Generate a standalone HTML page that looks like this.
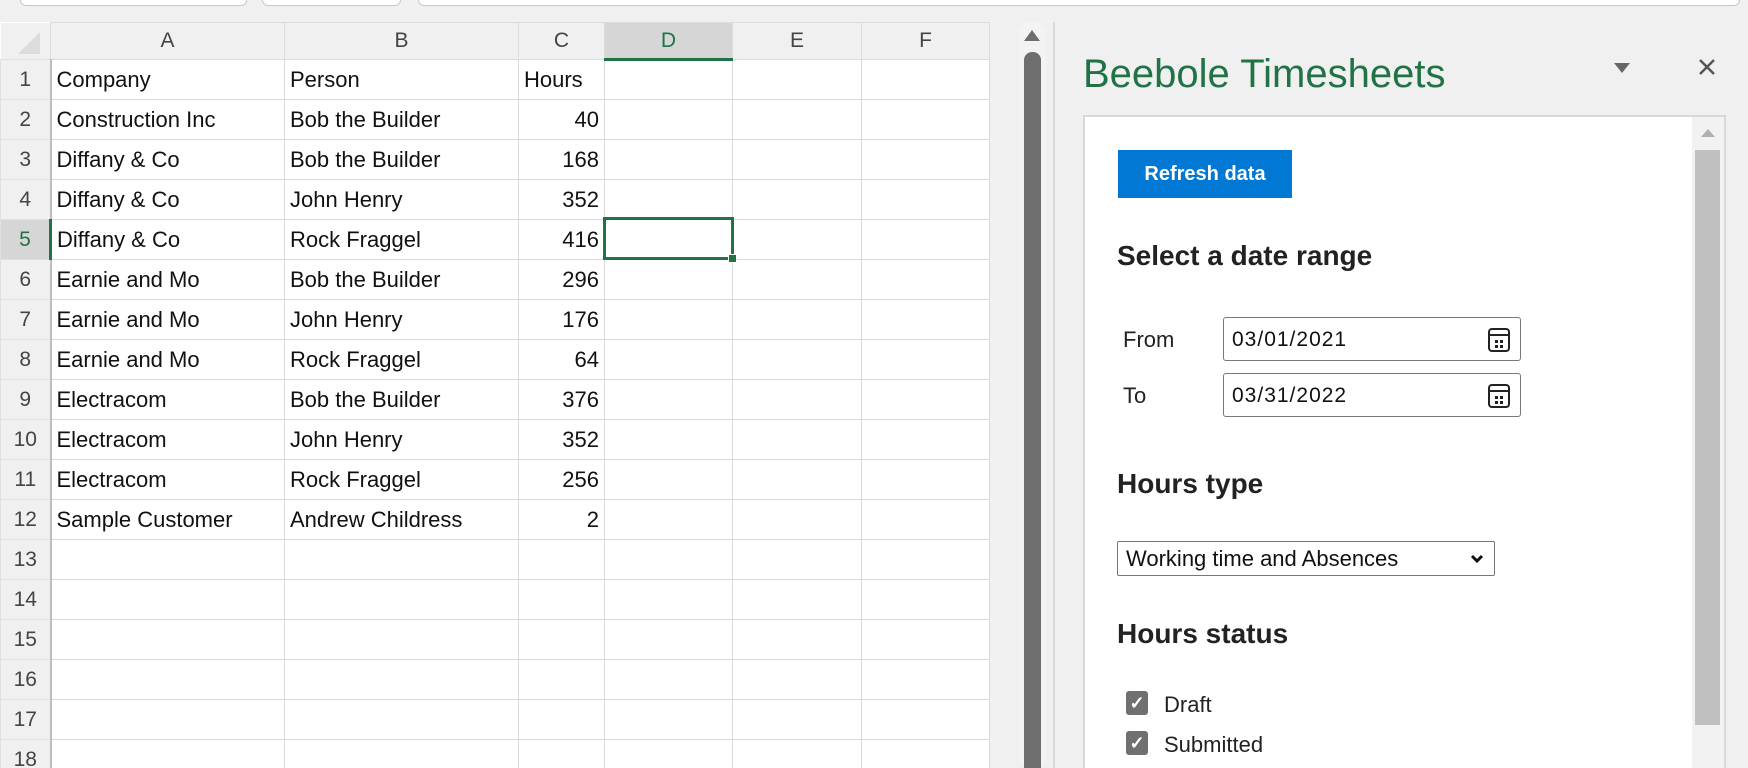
<!DOCTYPE html>
<html><head><meta charset="utf-8"><style>
*{box-sizing:border-box;margin:0;padding:0}
html,body{width:1748px;height:768px;overflow:hidden}
body{background:#f0f0f0;position:relative;font-family:"Liberation Sans",sans-serif}
#wrap{position:absolute;left:0;top:0;width:1748px;height:768px;overflow:hidden}
.tb{position:absolute;top:-6px;height:12px;background:#fff;border:1px solid #c8c8c8;border-radius:6px}
.grid{position:absolute;left:0;top:22px;width:990px;height:746px;overflow:hidden}
table{border-collapse:collapse;table-layout:fixed;background:#fff}
tr{height:40px}
td{border:1px solid #d9d9d9;height:40px;line-height:38px;font-size:22px;color:#111;padding:0 5px;white-space:nowrap;overflow:hidden}
tr.h{height:37px}
tr.h td{height:37px;line-height:34px;background:#f0f0f0;text-align:center;color:#444;font-size:21px;border-color:#dcdcdc;padding:0}
td.n{background:#f0f0f0;color:#444;text-align:center;padding:0;font-size:21px;border-color:#e0e0e0;border-right:2px solid #bdbdbd}
td.r{text-align:right}
.pane{position:absolute;left:1053px;top:22px;width:695px;height:746px;border-left:2px solid #dadada}
.abs{position:absolute}
.hd{font-weight:bold;font-size:28px;color:#222}
.inp{position:absolute;left:1223px;width:298px;height:44px;border:1.5px solid #777;border-radius:3px;background:#fff;font-size:21px;color:#111;padding:10px 0 0 8px;letter-spacing:1px}
.cal{position:absolute;right:10px;top:10px;width:22px;height:24px;border:2px solid #222;border-radius:4px}
.cal:before{content:"";position:absolute;left:0;right:0;top:4px;border-top:2px solid #222}
.cal:after{content:"";position:absolute;left:5px;top:10px;width:3px;height:3px;background:#222;box-shadow:5px 0 #222,0 5px #222,5px 5px #222}
.cb{position:absolute;left:1126px;width:22px;height:24px;background:#707070;border-radius:3px;color:#fff;font-size:18px;text-align:center;line-height:24px;font-weight:bold}
</style></head><body><div id="wrap">
<div class="tb" style="left:20px;width:227px"></div>
<div class="tb" style="left:262px;width:139px"></div>
<div class="tb" style="left:418px;width:1322px"></div>

<div class="grid"><table>
<colgroup><col style="width:50px"><col style="width:234px"><col style="width:234px"><col style="width:86px"><col style="width:128px"><col style="width:129px"><col style="width:128px"></colgroup>
<tr class="h"><td style="border:none"></td><td>A</td><td>B</td><td>C</td><td style="background:#d6d6d6;color:#217346;border-bottom:3px solid #217346">D</td><td>E</td><td>F</td></tr>
<tr><td class="n">1</td><td>Company</td><td>Person</td><td>Hours</td><td></td><td></td><td></td></tr>
<tr><td class="n">2</td><td>Construction Inc</td><td>Bob the Builder</td><td class="r">40</td><td></td><td></td><td></td></tr>
<tr><td class="n">3</td><td>Diffany &amp; Co</td><td>Bob the Builder</td><td class="r">168</td><td></td><td></td><td></td></tr>
<tr><td class="n">4</td><td>Diffany &amp; Co</td><td>John Henry</td><td class="r">352</td><td></td><td></td><td></td></tr>
<tr><td class="n" style="background:#d6d6d6;color:#217346;border-right:3px solid #217346">5</td><td>Diffany &amp; Co</td><td>Rock Fraggel</td><td class="r">416</td><td></td><td></td><td></td></tr>
<tr><td class="n">6</td><td>Earnie and Mo</td><td>Bob the Builder</td><td class="r">296</td><td></td><td></td><td></td></tr>
<tr><td class="n">7</td><td>Earnie and Mo</td><td>John Henry</td><td class="r">176</td><td></td><td></td><td></td></tr>
<tr><td class="n">8</td><td>Earnie and Mo</td><td>Rock Fraggel</td><td class="r">64</td><td></td><td></td><td></td></tr>
<tr><td class="n">9</td><td>Electracom</td><td>Bob the Builder</td><td class="r">376</td><td></td><td></td><td></td></tr>
<tr><td class="n">10</td><td>Electracom</td><td>John Henry</td><td class="r">352</td><td></td><td></td><td></td></tr>
<tr><td class="n">11</td><td>Electracom</td><td>Rock Fraggel</td><td class="r">256</td><td></td><td></td><td></td></tr>
<tr><td class="n">12</td><td>Sample Customer</td><td>Andrew Childress</td><td class="r">2</td><td></td><td></td><td></td></tr>
<tr><td class="n">13</td><td></td><td></td><td></td><td></td><td></td><td></td></tr>
<tr><td class="n">14</td><td></td><td></td><td></td><td></td><td></td><td></td></tr>
<tr><td class="n">15</td><td></td><td></td><td></td><td></td><td></td><td></td></tr>
<tr><td class="n">16</td><td></td><td></td><td></td><td></td><td></td><td></td></tr>
<tr><td class="n">17</td><td></td><td></td><td></td><td></td><td></td><td></td></tr>
<tr><td class="n">18</td><td></td><td></td><td></td><td></td><td></td><td></td></tr>
</table></div>
<svg class="abs" style="left:16px;top:30px" width="26" height="26"><polygon points="24,2 24,24 2,24" fill="#dcdcdc"/></svg>
<div class="abs" style="left:603px;top:217px;width:131px;height:43px;border:3px solid #217346"></div>
<div class="abs" style="left:728px;top:254px;width:9px;height:9px;background:#217346;border:1px solid #fff"></div>

<div class="abs" style="left:1018px;top:22px;width:28px;height:746px;background:#f3f3f3;border-radius:12px"></div>
<svg class="abs" style="left:1023px;top:28px" width="18" height="14"><polygon points="9,2 17,13 1,13" fill="#6e6e6e"/></svg>
<div class="abs" style="left:1024px;top:52px;width:17px;height:716px;background:#6e6e6e;border-radius:8px 8px 0 0"></div>

<div class="pane"></div>
<div class="abs" style="left:1083px;top:52px;font-size:40px;color:#217346">Beebole Timesheets</div>
<svg class="abs" style="left:1613px;top:62px" width="18" height="12"><polygon points="1,1 17,1 9,11" fill="#666"/></svg>
<svg class="abs" style="left:1697px;top:57px" width="20" height="20"><path d="M3 3L17 17M17 3L3 17" stroke="#555" stroke-width="2.5"/></svg>

<div class="abs" style="left:1083px;top:115px;width:643px;height:653px;background:#fff;border:2px solid #d8d8d8;border-bottom:none"></div>
<div class="abs" style="left:1692px;top:117px;width:32px;height:651px;background:#f2f2f2"></div>
<svg class="abs" style="left:1700px;top:128px" width="16" height="10"><polygon points="8,1 15,9 1,9" fill="#b0b0b0"/></svg>
<div class="abs" style="left:1695px;top:150px;width:25px;height:575px;background:#c0c0c0"></div>

<div class="abs" style="left:1118px;top:150px;width:174px;height:48px;background:#0078d4;color:#fff;font-weight:bold;font-size:20px;text-align:center;line-height:48px">Refresh data</div>
<div class="abs hd" style="left:1117px;top:240px">Select a date range</div>
<div class="abs" style="left:1123px;top:327px;font-size:22px;color:#222">From</div>
<div class="abs" style="left:1123px;top:383px;font-size:22px;color:#222">To</div>
<div class="inp" style="top:317px">03/01/2021<div class="cal"></div></div>
<div class="inp" style="top:373px">03/31/2022<div class="cal"></div></div>
<div class="abs hd" style="left:1117px;top:468px">Hours type</div>
<div class="abs" style="left:1117px;top:541px;width:378px;height:35px;border:1.5px solid #777;border-radius:2px;background:#fff;font-size:22px;color:#111;padding:4px 0 0 8px">Working time and Absences
<svg style="position:absolute;right:10px;top:12px" width="14" height="10"><path d="M2 2L7 7L12 2" stroke="#111" stroke-width="3" fill="none"/></svg></div>
<div class="abs hd" style="left:1117px;top:618px">Hours status</div>
<div class="cb" style="top:691px">✓</div>
<div class="abs" style="left:1164px;top:692px;font-size:22px;color:#222">Draft</div>
<div class="cb" style="top:731px">✓</div>
<div class="abs" style="left:1164px;top:732px;font-size:22px;color:#222">Submitted</div>
</div></body></html>
